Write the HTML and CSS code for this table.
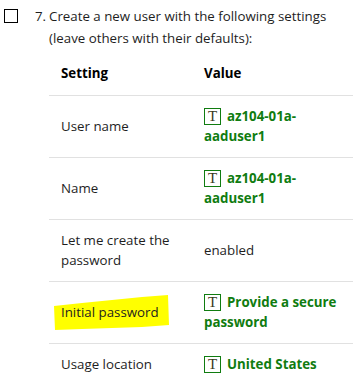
FILE: index.html
```html
<!DOCTYPE html>
<html lang="en">
<head>
    <meta charset="UTF-8">
    <title>Lab step</title>
    <link rel="stylesheet" href="styles.css">
</head>
<body>

<div class="step">
    <span class="check"></span>
    <span class="num">7.</span>
    <div class="step-body">
        <p>Create a new user with the following settings (leave others with their defaults):</p>

        <table>
            <thead>
                <tr>
                    <th>Setting</th>
                    <th>Value</th>
                </tr>
            </thead>
            <tbody>
                <tr>
                    <td>User name</td>
                    <td><span class="typed"><span class="t-icon">T</span>az104-01a-aaduser1</span></td>
                </tr>
                <tr>
                    <td>Name</td>
                    <td><span class="typed"><span class="t-icon">T</span>az104-01a-aaduser1</span></td>
                </tr>
                <tr>
                    <td>Let me create the password</td>
                    <td>enabled</td>
                </tr>
                <tr>
                    <td class="marked">
                        <!-- yellow marker stroke drawn over the label -->
                        <svg class="marker" width="120" height="38" viewBox="0 0 120 38">
                            <polygon points="2,12 30,9 60,6 90,3 116,1 117,31 90,33 60,34 30,35 3,36" fill="#ffff00"/>
                        </svg>
                        <span>Initial password</span>
                    </td>
                    <td><span class="typed"><span class="t-icon">T</span>Provide a secure password</span></td>
                </tr>
                <tr>
                    <td>Usage location</td>
                    <td><span class="typed"><span class="t-icon">T</span>United States</span></td>
                </tr>
            </tbody>
        </table>
    </div>
</div>

</body>
</html>
```

FILE: styles.css
```css
body {
    font-family: "Open Sans", "Noto Sans", sans-serif;
    font-size: 13.3px;
    margin: 0;
    padding: 0;
    background-color: #fff;
    color: #1e1e1e;
    overflow: hidden;
}
.step {
    display: flex;
    align-items: flex-start;
    padding-top: 5px;
}
.check {
    flex: none;
    width: 12px;
    height: 12px;
    border: 1.5px solid #000;
    margin: 4px 0 0 4px;
}
.num {
    width: 18px;
    margin-left: 17px;
    line-height: 22px;
}
.step-body {
    flex: 1;
}
.step-body p {
    margin: 0;
    line-height: 22px;
}

/* Table */
table {
    width: 304px;
    border-collapse: collapse;
    margin-top: 4px;
}
th, td {
    padding: 10px 12px 11px 12px;
    line-height: 20px;
    text-align: left;
    vertical-align: middle;
    border-bottom: 1px solid #e1e1e1;
}
th {
    font-weight: bold;
    color: #000;
    padding-top: 10px;
    padding-bottom: 12px;
}
th:first-child, td:first-child {
    width: 119px;
}
tr:last-child td {
    border-bottom: none;
}
.typed {
    color: #107c10;
    font-weight: bold;
}
.t-icon {
    display: inline-block;
    width: 15px;
    height: 15px;
    line-height: 15px;
    margin: 2px 6px 0 0;
    border: 1px solid #107c10;
    font-family: "Liberation Serif", serif;
    font-weight: normal;
    font-size: 15px;
    color: #3a3a1a;
    text-align: center;
    vertical-align: top;
}
.marked {
    position: relative;
}
.marker {
    position: absolute;
    left: 3px;
    top: 12px;
}
.marked span {
    position: relative;
}
```
